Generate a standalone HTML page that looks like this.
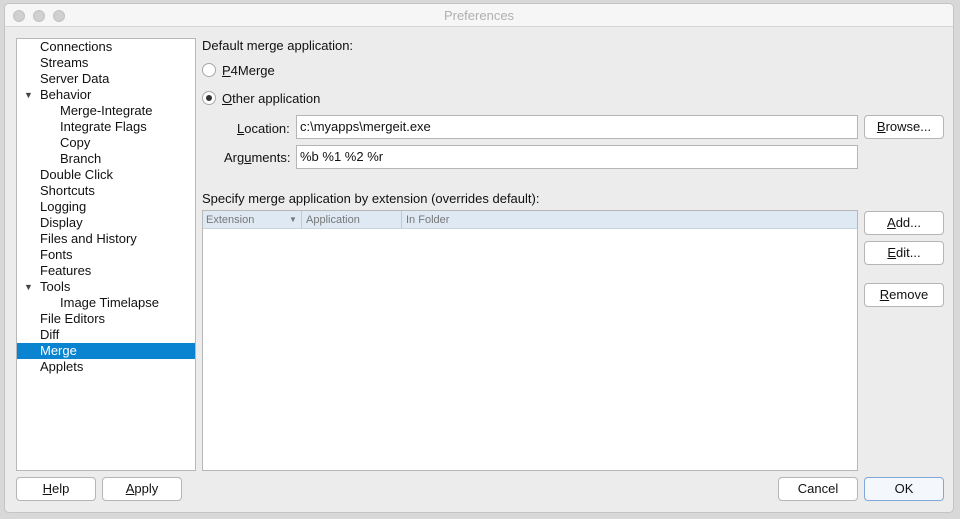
<!DOCTYPE html>
<html><head><style>
*{margin:0;padding:0;box-sizing:border-box}
body{width:960px;height:519px;background:#d8d8d8;font-family:"Liberation Sans",sans-serif;font-size:13px;color:#111;position:relative;overflow:hidden}
.win{position:absolute;left:4px;top:3px;width:950px;height:510px;background:#ececec;border:1px solid #c4c4c4;border-radius:5px;overflow:hidden}
.title{position:absolute;left:0;top:0;width:100%;height:23px;background:#f6f6f6;border-bottom:1px solid #d6d6d6;text-align:center;line-height:23px;color:#b0b0b0;font-size:13px}
.dot{position:absolute;top:6px;width:12px;height:12px;border-radius:50%;background:#d0d0d0;border:1px solid #c2c2c2}
.a{position:absolute}
.tree{left:11px;top:34px;width:180px;height:433px;background:#fff;border:1px solid #b8b8b8}
.tree div{position:absolute;height:16px;line-height:16px;white-space:nowrap}
.btn{position:absolute;height:24px;background:#fff;border:1px solid #b5b5b5;border-radius:4px;text-align:center;line-height:22px}
.inp{position:absolute;height:24px;background:#fff;border:1px solid #b5b5b5;line-height:22px;padding-left:3px}
.radio{position:absolute;width:14px;height:14px;border-radius:50%;border:1px solid #a8a8a8;background:#fff}
u{text-decoration:underline}
.tri{font-size:9px;color:#444}
</style></head><body>
<div class="win">
<div class="title">Preferences</div>
<div class="dot" style="left:8px"></div><div class="dot" style="left:28px"></div><div class="dot" style="left:48px"></div>
<div class="a tree">
<div style="left:23px;top:0px">Connections</div>
<div style="left:23px;top:16px">Streams</div>
<div style="left:23px;top:32px">Server Data</div>
<div class="tri" style="left:7px;top:48px">▼</div>
<div style="left:23px;top:48px">Behavior</div>
<div style="left:43px;top:64px">Merge-Integrate</div>
<div style="left:43px;top:80px">Integrate Flags</div>
<div style="left:43px;top:96px">Copy</div>
<div style="left:43px;top:112px">Branch</div>
<div style="left:23px;top:128px">Double Click</div>
<div style="left:23px;top:144px">Shortcuts</div>
<div style="left:23px;top:160px">Logging</div>
<div style="left:23px;top:176px">Display</div>
<div style="left:23px;top:192px">Files and History</div>
<div style="left:23px;top:208px">Fonts</div>
<div style="left:23px;top:224px">Features</div>
<div class="tri" style="left:7px;top:240px">▼</div>
<div style="left:23px;top:240px">Tools</div>
<div style="left:43px;top:256px">Image Timelapse</div>
<div style="left:23px;top:272px">File Editors</div>
<div style="left:23px;top:288px">Diff</div>
<div style="left:0;top:304px;width:178px;background:#0a84d0;color:#fff;padding-left:23px">Merge</div>
<div style="left:23px;top:320px">Applets</div>
</div>
<div class="a" style="left:197px;top:34px">Default merge application:</div>
<div class="radio" style="left:197px;top:59px"></div>
<div class="a" style="left:217px;top:59px"><u>P</u>4Merge</div>
<div class="radio" style="left:197px;top:87px"><div style="position:absolute;left:3px;top:3px;width:6px;height:6px;border-radius:50%;background:#333"></div></div>
<div class="a" style="left:217px;top:87px"><u>O</u>ther application</div>
<div class="a" style="left:232px;top:117px"><u>L</u>ocation:</div>
<div class="inp" style="left:291px;top:111px;width:562px">c:\myapps\mergeit.exe</div>
<div class="btn" style="left:859px;top:111px;width:80px"><u>B</u>rowse...</div>
<div class="a" style="left:219px;top:146px">Arg<u>u</u>ments:</div>
<div class="inp" style="left:291px;top:141px;width:562px">%b %1 %2 %r</div>
<div class="a" style="left:197px;top:187px">Specify merge application by extension (overrides default):</div>
<div class="a" style="left:197px;top:206px;width:656px;height:261px;background:#fff;border:1px solid #b8b8b8">
<div style="position:absolute;left:0;top:0;width:100%;height:18px;background:#dfe9f4;border-bottom:1px solid #c8d4e2;font-size:11px;color:#777;line-height:18px">
<span style="position:absolute;left:3px">Extension</span><span style="position:absolute;left:86px;font-size:8px">▼</span>
<span style="position:absolute;left:98px;top:0;height:18px;border-left:1px solid #c0c8d4;padding-left:4px">Application</span>
<span style="position:absolute;left:198px;top:0;height:18px;border-left:1px solid #c0c8d4;padding-left:4px">In Folder</span>
</div></div>
<div class="btn" style="left:859px;top:207px;width:80px"><u>A</u>dd...</div>
<div class="btn" style="left:859px;top:237px;width:80px"><u>E</u>dit...</div>
<div class="btn" style="left:859px;top:279px;width:80px"><u>R</u>emove</div>
<div class="btn" style="left:11px;top:473px;width:80px"><u>H</u>elp</div>
<div class="btn" style="left:97px;top:473px;width:80px"><u>A</u>pply</div>
<div class="btn" style="left:773px;top:473px;width:80px">Cancel</div>
<div class="btn" style="left:859px;top:473px;width:80px;border-color:#7fa8d8;background:#f4f8fd">OK</div>
</div>
</body></html>
